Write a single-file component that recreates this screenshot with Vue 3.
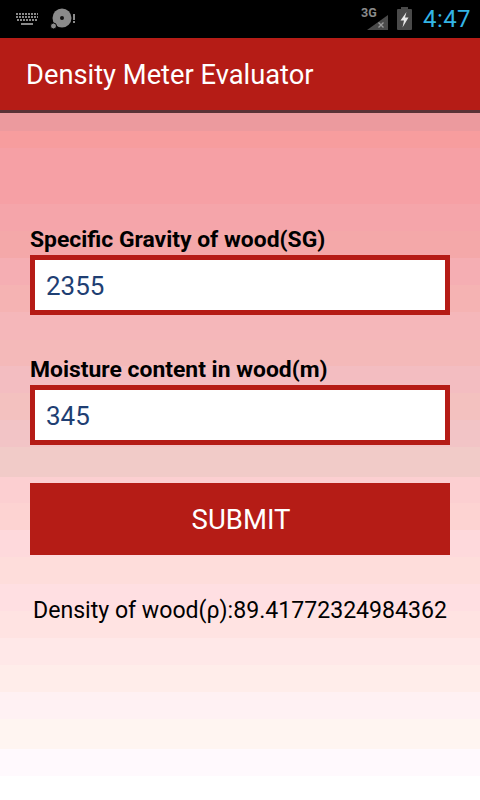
<script setup>
const bands = [
  ['#ec9a9e', 113], ['#f79d9e', 131], ['#f6a0a5', 148], ['#f5a5aa', 204], ['#f4a8a9', 231], ['#f5aeb3', 258],
  ['#f5b3b3', 285], ['#f5b7ba', 312], ['#f4b9b9', 340], ['#f3bdc1', 366], ['#f3c1bf', 393], ['#f2c4c6', 420],
  ['#f1cbc8', 447], ['#fccfd1', 477], ['#fdd3d2', 503], ['#fed9dc', 530], ['#fedddb', 557], ['#ffdfe2', 584],
  ['#ffe3e2', 611], ['#ffe8e8', 638], ['#ffedea', 665], ['#fff1f3', 692], ['#fff5f1', 719], ['#fff9fd', 749], ['#ffffff', 776]
]
const stops = bands.map(([c, y], i) => {
  const end = i + 1 < bands.length ? bands[i + 1][1] : 800
  return `${c} ${y - 113}px ${end - 113}px`
}).join(', ')
const bg = `linear-gradient(to bottom, ${stops})`
const keyRows = [
  { y: 0, x: 0, n: 8 },
  { y: 3, x: 0, n: 8 },
  { y: 6, x: 1, n: 7 }
]
</script>

<template>
  <div class="screen">
    <div class="status">
      <div class="status-left">
        <svg class="kbd" width="22" height="12" viewBox="0 0 22 12">
          <g fill="#8a8a8a">
            <template v-for="row in keyRows" :key="row.y">
              <rect v-for="n in row.n" :key="n" :x="row.x + (n - 1) * 3" :y="row.y" width="2" height="2" />
            </template>
            <rect x="5" y="10" width="12" height="2" />
          </g>
        </svg>
        <svg class="disc" width="26" height="22" viewBox="0 0 26 22">
          <circle cx="12" cy="10" r="9.5" fill="#8a8a8a" />
          <circle cx="12" cy="10" r="2" fill="#111" />
          <circle cx="3.5" cy="18" r="3" fill="#8a8a8a" stroke="#000" stroke-width="1" />
          <rect x="23" y="6" width="2" height="6" fill="#8a8a8a" />
          <rect x="23" y="13" width="2" height="2" fill="#8a8a8a" />
        </svg>
      </div>
      <div class="status-right">
        <span class="net">3G</span>
        <svg class="signal" width="21" height="15" viewBox="0 0 21 15">
          <path d="M0 15 L21 0 V15 Z" fill="#4a4a4a" />
          <path d="M11.5 7.5 L16.5 12.5 M16.5 7.5 L11.5 12.5" stroke="#9a9a9a" stroke-width="1.4" />
        </svg>
        <svg class="battery" width="15" height="23" viewBox="0 0 15 23">
          <rect x="4" y="0" width="7" height="3" fill="#4a4a4a" />
          <rect x="0" y="2" width="15" height="21" rx="1" fill="#4a4a4a" />
          <path d="M9.5 5 L3.5 13.5 H7 L5.5 20.5 L11.5 10.5 H8 Z" fill="#e8e8e8" />
        </svg>
        <span class="clock">4:47</span>
      </div>
    </div>
    <div class="appbar">Density Meter Evaluator</div>
    <div class="content" :style="{ backgroundImage: bg }">
      <label class="label first">Specific Gravity of wood(SG)</label>
      <div class="field">2355</div>
      <label class="label second">Moisture content in wood(m)</label>
      <div class="field">345</div>
      <button class="submit">SUBMIT</button>
      <p class="result">Density of wood(ρ):89.41772324984362</p>
    </div>
  </div>
</template>

<style>
html, body { margin: 0; padding: 0; }
</style>

<style scoped>
.screen {
  width: 480px;
  height: 800px;
  display: flex;
  flex-direction: column;
  overflow: hidden;
  font-family: Roboto, "Liberation Sans", sans-serif;
}
.status {
  height: 38px;
  flex: none;
  background: #000;
  display: flex;
  justify-content: space-between;
  align-items: flex-start;
}
.status-left {
  display: flex;
  align-items: flex-start;
  padding-left: 16px;
  gap: 12px;
}
.kbd { margin-top: 13px; }
.disc { margin-top: 8px; }
.status-right {
  display: flex;
  align-items: flex-start;
  padding-right: 9px;
}
.net {
  color: #8a8a8a;
  font-size: 12.5px;
  font-weight: 700;
  line-height: 14px;
  margin-top: 6px;
  width: 14px;
  margin-right: -8px;
  white-space: nowrap;
}
.signal { margin-top: 15px; margin-right: 9px; }
.battery { margin-top: 7px; margin-right: 11px; }
.clock {
  color: #33b5e5;
  font-size: 24px;
  line-height: 30px;
  margin-top: 4px;
  letter-spacing: 0.4px;
}
.appbar {
  height: 72px;
  flex: none;
  background: #b51c16;
  border-bottom: 3px solid #5a3236;
  color: #fff;
  font-size: 27.3px;
  line-height: 74px;
  padding-left: 26px;
}
.content {
  flex: 1;
  display: flex;
  flex-direction: column;
  padding: 0 30px;
}
.label {
  display: block;
  color: #000;
  font-size: 22.9px;
  font-weight: 700;
  line-height: 26px;
  white-space: nowrap;
}
.first { margin-top: 114px; }
.second { margin-top: 42px; }
.field {
  box-sizing: border-box;
  height: 60px;
  margin-top: 2px;
  background: #fff;
  border: 5px solid #b51c16;
  color: #1f3f73;
  font-size: 26px;
  line-height: 52px;
  padding-left: 11px;
}
.submit {
  height: 72px;
  margin-top: 38px;
  border: 0;
  padding: 0 0 0 2px;
  background: #b51c16;
  color: #fff;
  font-family: inherit;
  font-size: 27.5px;
}
.result {
  margin: 42px 0 0;
  text-align: center;
  color: #000;
  font-size: 23.1px;
  line-height: 28px;
  white-space: nowrap;
}
</style>
